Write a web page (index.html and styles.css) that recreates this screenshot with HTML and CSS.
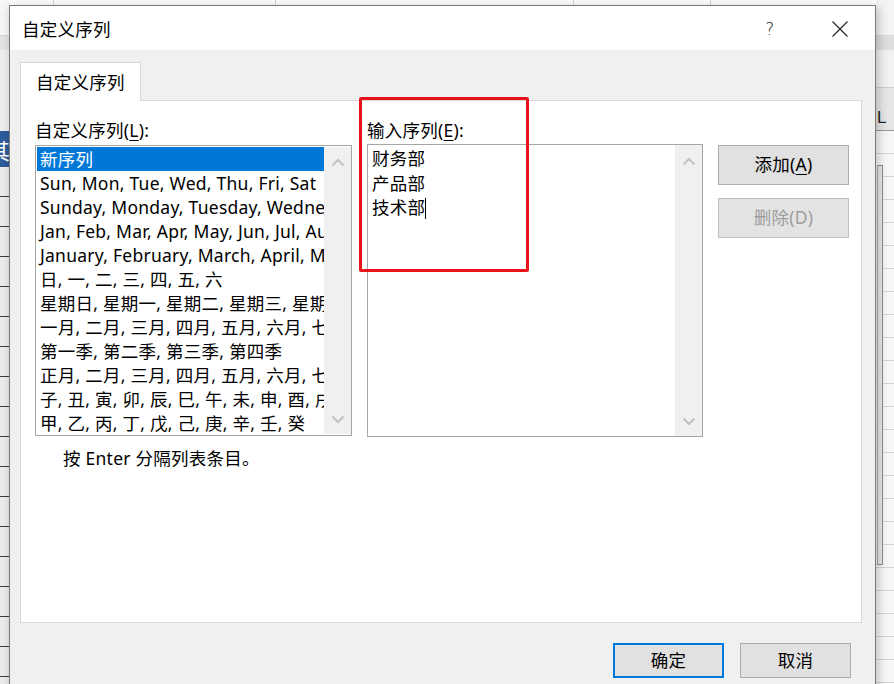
FILE: index.html
```html
<!DOCTYPE html>
<html lang="zh-CN">
<head>
<meta charset="utf-8">
<title>自定义序列</title>
<link rel="stylesheet" href="styles.css">
</head>
<body>
<div class="sheet">
  <div class="strip strip-left">
    <div class="sl-top"></div>
    <div class="sl-band"></div>
    <div class="sl-grey"></div>
    <div class="sl-blue">其</div>
    <div class="sl-rows"></div>
  </div>
  <div class="sheet-mid"></div>
  <div class="strip strip-right">
    <div class="sr-top"></div>
    <div class="sr-band"></div>
    <div class="sr-grey"></div>
    <div class="sr-head">L</div>
    <div class="sr-rows"><div class="sr-frame"></div></div>
  </div>
</div>

<div class="dialog">
  <div class="titlebar">
    <div class="title">自定义序列</div>
    <div class="tb-btn help">?</div>
    <div class="tb-btn close">
      <svg width="16" height="16" viewBox="0 0 16 16"><path d="M0.5 0.5 L15.5 15.5 M15.5 0.5 L0.5 15.5" stroke="#222" stroke-width="1.1" fill="none"/></svg>
    </div>
  </div>
  <div class="body">
    <div class="tabs"><div class="tab">自定义序列</div></div>
    <div class="panel">
      <div class="cols">
        <div class="col col-list">
          <div class="label">自定义序列(<u>L</u>):</div>
          <div class="listbox">
            <div class="rows">
              <div class="row selected">新序列</div>
              <div class="row">Sun, Mon, Tue, Wed, Thu, Fri, Sat</div>
              <div class="row">Sunday, Monday, Tuesday, Wednesday, Thursday, Friday, Saturday</div>
              <div class="row">Jan, Feb, Mar, Apr, May, Jun, Jul, Aug, Sep, Oct, Nov, Dec</div>
              <div class="row">January, February, March, April, May, June, July</div>
              <div class="row">日, 一, 二, 三, 四, 五, 六</div>
              <div class="row">星期日, 星期一, 星期二, 星期三, 星期四, 星期五, 星期六</div>
              <div class="row">一月, 二月, 三月, 四月, 五月, 六月, 七月, 八月</div>
              <div class="row">第一季, 第二季, 第三季, 第四季</div>
              <div class="row">正月, 二月, 三月, 四月, 五月, 六月, 七月, 八月</div>
              <div class="row">子, 丑, 寅, 卯, 辰, 巳, 午, 未, 申, 酉, 戌, 亥</div>
              <div class="row">甲, 乙, 丙, 丁, 戊, 己, 庚, 辛, 壬, 癸</div>
            </div>
            <div class="scroll">
              <svg class="chev" width="14" height="9" viewBox="0 0 14 9"><path d="M1.5 7.5 L7 2 L12.5 7.5" stroke="#c2c2c2" stroke-width="2" fill="none"/></svg>
              <svg class="chev" width="14" height="9" viewBox="0 0 14 9"><path d="M1.5 1.5 L7 7 L12.5 1.5" stroke="#c2c2c2" stroke-width="2" fill="none"/></svg>
            </div>
          </div>
          <div class="hint">按 Enter 分隔列表条目。</div>
        </div>
        <div class="col col-edit">
          <div class="label">输入序列(<u>E</u>):</div>
          <div class="editbox">
            <div class="edit-text">
              <div class="line">财务部</div>
              <div class="line">产品部</div>
              <div class="line">技术部<span class="caret"></span></div>
            </div>
            <div class="scroll">
              <svg class="chev" width="14" height="9" viewBox="0 0 14 9"><path d="M1.5 7.5 L7 2 L12.5 7.5" stroke="#c2c2c2" stroke-width="2" fill="none"/></svg>
              <svg class="chev" width="14" height="9" viewBox="0 0 14 9"><path d="M1.5 1.5 L7 7 L12.5 1.5" stroke="#c2c2c2" stroke-width="2" fill="none"/></svg>
            </div>
          </div>
        </div>
        <div class="col col-btns">
          <div class="btn">添加(<u>A</u>)</div>
          <div class="btn disabled">删除(D)</div>
        </div>
      </div>
    </div>
    <div class="footer">
      <div class="btn foot default">确定</div>
      <div class="btn foot">取消</div>
    </div>
  </div>
  <div class="highlight"></div>
</div>
</body>
</html>
```

FILE: styles.css
```css
* { box-sizing: border-box; }

html, body {
  margin: 0;
  padding: 0;
  width: 894px;
  height: 684px;
  overflow: hidden;
}

body {
  font-family: "Noto Sans", "Noto Sans CJK SC", sans-serif;
  font-size: 17.5px;
  letter-spacing: 0.25px;
  color: #000;
  background: #fff;
  position: relative;
}

/* ---------- background spreadsheet ---------- */
.sheet {
  display: flex;
  height: 684px;
}
.strip { display: flex; flex-direction: column; }
.strip-left { width: 9px; }
.sheet-mid {
  flex: 1;
  background:
    linear-gradient(#d4d4d4, #d4d4d4) 44px 0 / 1px 6px no-repeat,
    linear-gradient(#d4d4d4, #d4d4d4) 266px 0 / 1px 6px no-repeat,
    linear-gradient(#d4d4d4, #d4d4d4) 564px 0 / 1px 6px no-repeat,
    linear-gradient(#d4d4d4, #d4d4d4) 701px 0 / 1px 6px no-repeat,
    #fff;
}
.strip-right { width: 18px; }

.sl-top { height: 36px; background: #f7f7f7; border-bottom: 1px solid #d8d8d8; }
.sl-band { height: 14px; background: #e4e4e4; }
.sl-grey { height: 81px; background: #efefef; }
.sl-blue {
  height: 36px;
  background: #2e5c9b;
  color: #fff;
  font-family: "Noto Sans CJK SC", sans-serif;
  font-size: 22px;
  line-height: 36px;
  text-indent: -12px;
  white-space: nowrap;
  overflow: hidden;
}
.sl-rows {
  flex: 1;
  background:
    repeating-linear-gradient(to bottom, transparent 0 29px, #3a3a3a 29px 30px),
    #ececec;
}

.sr-top { height: 36px; background: #f4f4f4; border-bottom: 1px solid #d8d8d8; }
.sr-band { height: 14px; background: #dedede; }
.sr-grey { height: 38px; background: #f2f2f2; border-bottom: 1px solid #cfcfcf; }
.sr-head {
  height: 43px;
  background: #e6e6e6;
  border-bottom: 1px solid #9a9a9a;
  font-family: "Liberation Sans", sans-serif;
  font-size: 17px;
  line-height: 60px;
  padding-left: 1px;
  color: #222;
}
.sr-rows {
  flex: 1;
  position: relative;
  background:
    repeating-linear-gradient(to bottom, transparent 0 22px, #d6d6d6 22px 23px),
    #f7f7f7;
}
.sr-frame {
  position: absolute;
  left: 1px;
  top: 34px;
  width: 6px;
  height: 400px;
  border: 1px solid #8c8c8c;
  border-left-color: #b0b0b0;
  background: #e9e9e9;
}

/* ---------- dialog window ---------- */
.dialog {
  position: absolute;
  left: 9px;
  top: 5px;
  width: 867px;
  height: 700px;
  border: 1px solid #7a7a7a;
  background: #f0f0f0;
  box-shadow: 2px 2px 10px rgba(0,0,0,0.25);
}

.titlebar {
  height: 44px;
  background: #fff;
  display: flex;
  align-items: center;
}
.title {
  flex: 1;
  padding-left: 12px;
  font-family: "Noto Sans CJK SC", sans-serif;
  font-size: 17.5px;
  padding-top: 1px;
}
.tb-btn {
  width: 70px;
  height: 44px;
  display: flex;
  align-items: center;
  justify-content: center;
}
.help {
  font-family: "DejaVu Sans", sans-serif;
  font-size: 17px;
  font-weight: 300;
  color: #222;
  padding-top: 1px;
}
.close svg { display: block; margin-top: 2px; }

.body {
  padding: 12px 13px 0 10px;
}

.tabs { display: flex; }
.tab {
  position: relative;
  z-index: 1;
  width: 121px;
  height: 39px;
  margin-bottom: -1px;
  background: #fff;
  border: 1px solid #d9d9d9;
  border-bottom: none;
  padding-left: 15px;
  line-height: 38px;
  font-family: "Noto Sans CJK SC", sans-serif;
}

.panel {
  height: 523px;
  background: #fff;
  border: 1px solid #d9d9d9;
  padding: 17px 0 0 14px;
}

.cols {
  display: flex;
  gap: 15px;
  align-items: flex-start;
}
.col { display: flex; flex-direction: column; }
.col-list { width: 317px; }
.col-edit { width: 336px; }
.col-btns { width: 131px; padding-top: 27px; gap: 13px; }

.label {
  line-height: 24px;
  height: 24px;
  margin-bottom: 3px;
  white-space: nowrap;
}
.label u, .btn u { text-underline-offset: 3px; }

.listbox, .editbox {
  display: flex;
  border: 1px solid #a6a6a6;
  background: #fff;
}
.listbox {
  height: 291px;
  padding: 1px 0 1px 1px;
}
.rows {
  width: 287px;
  overflow: hidden;
}
.row {
  height: 24px;
  line-height: 24px;
  padding-left: 3px;
  white-space: nowrap;
  overflow: hidden;
}
.row.selected {
  background: #0078d7;
  color: #fff;
}

.scroll {
  width: 27px;
  background: #f0f0f0;
  display: flex;
  flex-direction: column;
  justify-content: space-between;
  align-items: center;
  padding: 11px 0 10px;
}
.chev { display: block; }

.editbox {
  height: 293px;
  margin-top: -1px;
}
.edit-text {
  flex: 1;
  padding: 1px 0 0 4px;
}
.line {
  height: 24.5px;
  line-height: 24px;
  white-space: nowrap;
}
.caret {
  display: inline-block;
  width: 1px;
  height: 21px;
  background: #000;
  vertical-align: -5px;
}
.editbox .scroll { padding: 12px 0 10px; }

.hint {
  margin-top: 10px;
  padding-left: 28px;
  line-height: 24px;
}

.btn {
  height: 40px;
  padding-bottom: 3px;
  background: #e1e1e1;
  border: 1px solid #adadad;
  display: flex;
  align-items: center;
  justify-content: center;
  white-space: nowrap;
}
.btn.disabled {
  background: #e3e3e3;
  border-color: #bfbfbf;
  color: #9d9d9d;
}

.footer {
  display: flex;
  justify-content: flex-end;
  gap: 16px;
  padding: 20px 11px 0 0;
}
.btn.foot {
  width: 111px;
  height: 35px;
  padding-bottom: 2px;
}
.btn.default {
  border: 2px solid #0078d7;
}

/* red annotation frame */
.highlight {
  position: absolute;
  left: 349px;
  top: 91px;
  width: 170px;
  height: 175px;
  border: 3px solid #e8141c;
  border-radius: 2px;
}
```
